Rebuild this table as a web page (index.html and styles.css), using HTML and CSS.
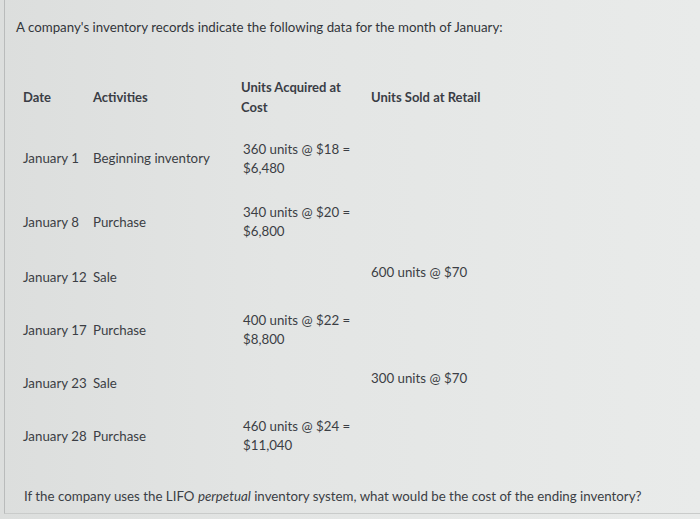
FILE: index.html
```html
<!DOCTYPE html>
<html lang="en">
<head>
<meta charset="utf-8">
<title>Inventory records</title>
<link rel="stylesheet" href="styles.css">
</head>
<body>
<div class="page">
  <p class="intro">A company's inventory records indicate the following data for the month of January:</p>
  <div class="table">
    <div class="th c-date">Date</div>
    <div class="th c-act">Activities</div>
    <div class="th c-acq">Units Acquired at<br>Cost</div>
    <div class="th c-sold">Units Sold at Retail</div>

    <div class="td c-date">January 1</div>
    <div class="td c-act">Beginning inventory</div>
    <div class="td c-acq">360 units @ $18 =<br>$6,480</div>
    <div class="td c-sold"></div>

    <div class="td c-date">January 8</div>
    <div class="td c-act">Purchase</div>
    <div class="td c-acq">340 units @ $20 =<br>$6,800</div>
    <div class="td c-sold"></div>

    <div class="td c-date">January 12</div>
    <div class="td c-act">Sale</div>
    <div class="td c-acq"></div>
    <div class="td c-sold up">600 units @ $70</div>

    <div class="td c-date">January 17</div>
    <div class="td c-act">Purchase</div>
    <div class="td c-acq">400 units @ $22 =<br>$8,800</div>
    <div class="td c-sold"></div>

    <div class="td c-date">January 23</div>
    <div class="td c-act">Sale</div>
    <div class="td c-acq"></div>
    <div class="td c-sold up">300 units @ $70</div>

    <div class="td c-date">January 28</div>
    <div class="td c-act">Purchase</div>
    <div class="td c-acq">460 units @ $24 =<br>$11,040</div>
    <div class="td c-sold"></div>
  </div>
  <p class="question">If the company uses the LIFO <em>perpetual</em> inventory system, what would be the cost of the ending inventory?</p>
</div>
</body>
</html>
```

FILE: styles.css
```css
html, body {
  margin: 0;
  padding: 0;
}
body {
  width: 700px;
  height: 519px;
  overflow: hidden;
  background: linear-gradient(90deg, #dcdedd 0%, #e3e5e4 40%, #e9ebea 100%);
  font-family: Lato, "Open Sans", sans-serif;
  font-size: 13.3px;
  color: #3b3e44;
}
.page {
  margin-left: 4px;
  height: 514px;
  border-left: 1px solid #b9bbbb;
  border-bottom: 1px solid #c9cbca;
  box-sizing: border-box;
  padding: 17px 0 0 11px;
}
.intro {
  margin: 0;
  line-height: 20px;
  color: #33363b;
}
.table {
  margin-top: 31px;
  display: grid;
  grid-template-columns: 70px 148px 130px 1fr;
  grid-template-rows: 58px 65px 62px 48px 58px 48px 58px;
  padding-left: 7px;
}
.th, .td {
  display: flex;
  align-items: center;
  line-height: 19px;
}
.th {
  font-weight: 700;
  font-size: 13px;
  color: #3a3d45;
  line-height: 20px;
}
.td.c-acq {
  padding-left: 2px;
}
.up {
  padding-bottom: 10px;
}
.question {
  margin: 21px 0 0 8px;
  line-height: 20px;
  color: #3b3e44;
}
.question em {
  font-style: italic;
}
```
